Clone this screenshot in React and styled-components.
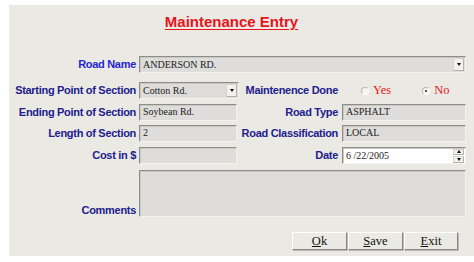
import React from "react";
import styled, { createGlobalStyle } from "styled-components";

const Global = createGlobalStyle`
  html, body { margin: 0; padding: 0; background: #ffffff; }
  body { font-family: "Liberation Sans", Arial, sans-serif; }
`;

const Panel = styled.div`
  margin: 5px 0 0 9px;
  width: 465px;
  height: 251px;
  box-sizing: border-box;
  background: #ebe9e4;
  padding: 8px 8px 0 0;
  display: flex;
  flex-direction: column;
`;

const Title = styled.h1`
  margin: 0;
  padding-right: 12px;
  text-align: center;
  font-family: "Liberation Sans", Arial, sans-serif;
  font-weight: bold;
  font-size: 15px;
  line-height: 18px;
  color: #e8141c;
  text-decoration: underline;
  text-underline-offset: 2px;
`;

const Grid = styled.div`
  display: grid;
  grid-template-columns: 130px 100px 103px 124px;
  grid-auto-rows: 17px;
  row-gap: 4.7px;
  align-items: stretch;
`;

const RoadGrid = styled(Grid)`
  margin-top: 25px;
  margin-bottom: 9px;
`;

const Label = styled.label`
  display: flex;
  align-items: ${(p) => (p.$bottom ? "flex-end" : "center")};
  justify-content: flex-end;
  padding-right: ${(p) => p.$pr ?? 3}px;
  font-weight: bold;
  font-size: 11px;
  letter-spacing: -0.3px;
  line-height: 13px;
  color: ${(p) => (p.$bright ? "#2424d2" : "#20208e")};
  white-space: nowrap;
`;

const Field = styled.div`
  grid-column: ${(p) => p.$span || "auto"};
  box-sizing: border-box;
  display: flex;
  align-items: center;
  background: ${(p) => (p.$white ? "#ffffff" : "#dedddc")};
  border-top: 1px solid #8d8d8a;
  border-left: 1px solid #8d8d8a;
  border-right: 1px solid #f4f3f0;
  border-bottom: 1px solid #f4f3f0;
  box-shadow: inset 1px 1px 0 #c9c8c4;
  font-family: "Liberation Serif", "Times New Roman", serif;
  font-size: 10px;
  color: #222;
  padding-left: 3px;
  padding-right: 1px;
  width: ${(p) => (p.$w ? `${p.$w}px` : "auto")};
  overflow: hidden;
  white-space: nowrap;
`;

const FieldText = styled.span`
  flex: 1;
  ${(p) => (p.$top ? "align-self: flex-start; margin-top: 1px;" : "")}
`;

const DropButton = styled.span`
  width: 11px;
  height: 13px;
  box-sizing: border-box;
  background: #f2f1ee;
  border: 1px solid #d6d5d1;
  border-right-color: #b2b1ad;
  border-bottom-color: #b2b1ad;
  display: flex;
  align-items: center;
  justify-content: center;
`;

const Arrow = styled.span`
  width: 0;
  height: 0;
  border-left: 2.5px solid transparent;
  border-right: 2.5px solid transparent;
  border-${(p) => (p.$up ? "bottom" : "top")}: 3px solid #111;
`;

const Spin = styled.span`
  display: flex;
  flex-direction: column;
  gap: 1px;
  height: 14px;
`;

const SpinButton = styled(DropButton)`
  height: 6.5px;
`;

const RadioGroup = styled.div`
  display: flex;
  align-items: center;
  padding-left: 19px;
  gap: 31px;
`;

const RadioItem = styled.span`
  display: flex;
  align-items: center;
  gap: 4px;
  font-family: "Liberation Serif", "Times New Roman", serif;
  font-size: 12.5px;
  color: #e81a1a;
`;

const RadioDot = styled.span`
  width: 6px;
  height: 6px;
  border-radius: 50%;
  border: 1px solid #b8b7b3;
  border-bottom-color: #ffffff;
  border-right-color: #ffffff;
  background: #f4f4f2;
  display: flex;
  align-items: center;
  justify-content: center;
  &::after {
    content: "";
    width: 2px;
    height: 2px;
    border-radius: 50%;
    background: ${(p) => (p.$on ? "#222" : "transparent")};
  }
`;

const CommentsRow = styled.div`
  margin-top: 6px;
  display: grid;
  grid-template-columns: 130px 327px;
  height: 47px;
`;

const ButtonBar = styled.div`
  margin-top: 15px;
  display: flex;
  justify-content: flex-end;
  padding-right: 8px;
  gap: 1px;
`;

const Button = styled.button`
  width: ${(p) => p.$w}px;
  height: 18px;
  box-sizing: border-box;
  background: #ebe9e4;
  border: 1px solid #ffffff;
  border-right-color: #8a8985;
  border-bottom-color: #8a8985;
  box-shadow: 1px 1px 0 #b9b8b4;
  font-family: "Liberation Serif", "Times New Roman", serif;
  font-size: 12.5px;
  color: #111;
  padding: 0;
  display: flex;
  align-items: center;
  justify-content: center;
  u { text-underline-offset: 1px; }
`;

export default function App() {
  return (
    <>
      <Global />
      <Panel>
        <Title>Maintenance Entry</Title>
        <RoadGrid>
          <Label $bright>Road Name</Label>
          <Field $span="2 / 5">
            <FieldText>ANDERSON RD.</FieldText>
            <DropButton><Arrow /></DropButton>
          </Field>
        </RoadGrid>
        <Grid>
          <Label>Starting Point of Section</Label>
          <Field>
            <FieldText>Cotton Rd.</FieldText>
            <DropButton><Arrow /></DropButton>
          </Field>
          <Label $pr={4}>Maintenence Done</Label>
          <RadioGroup>
            <RadioItem><RadioDot />Yes</RadioItem>
            <RadioItem><RadioDot $on />No</RadioItem>
          </RadioGroup>

          <Label>Ending Point of Section</Label>
          <Field $w={98}><FieldText $top>Soybean Rd.</FieldText></Field>
          <Label $pr={4}>Road Type</Label>
          <Field><FieldText $top>ASPHALT</FieldText></Field>

          <Label>Length of Section</Label>
          <Field $w={98}><FieldText $top>2</FieldText></Field>
          <Label $pr={4}>Road Classification</Label>
          <Field><FieldText $top>LOCAL</FieldText></Field>

          <Label>Cost in $</Label>
          <Field $w={98}><FieldText /></Field>
          <Label $pr={4}>Date</Label>
          <Field $white>
            <FieldText>6 /22/2005</FieldText>
            <Spin>
              <SpinButton><Arrow $up /></SpinButton>
              <SpinButton><Arrow /></SpinButton>
            </Spin>
          </Field>
        </Grid>
        <CommentsRow>
          <Label $bottom>Comments</Label>
          <Field><FieldText /></Field>
        </CommentsRow>
        <ButtonBar>
          <Button $w={55}><span><u>O</u>k</span></Button>
          <Button $w={55}><span><u>S</u>ave</span></Button>
          <Button $w={54}><span><u>E</u>xit</span></Button>
        </ButtonBar>
      </Panel>
    </>
  );
}
